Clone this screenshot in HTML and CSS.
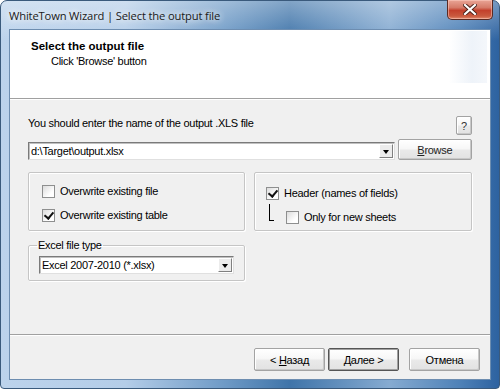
FILE: index.html
```html
<!DOCTYPE html>
<html>
<head>
    <meta charset="UTF-8">
    <title>WhiteTown Wizard</title>
    <link rel="stylesheet" href="styles.css">
</head>
<body>
    <div class="window">
        <div class="titlebar">
            <span class="title">WhiteTown Wizard | Select the output file</span>
            <div class="close-btn">
                <svg width="14" height="11" viewBox="0 0 14 11">
                    <path d="M2 1 L12 10 M12 1 L2 10" stroke="#4a2018" stroke-width="4" stroke-linecap="square"/>
                    <path d="M2 1 L12 10 M12 1 L2 10" stroke="#ffffff" stroke-width="2.2" stroke-linecap="square"/>
                </svg>
            </div>
        </div>

        <div class="client">
            <div class="header">
                <div class="header-text">
                    <div class="header-title">Select the output file</div>
                    <div class="header-sub">Click 'Browse' button</div>
                </div>
                <div class="header-pic"></div>
            </div>
            <div class="sep"></div>

            <div class="content">
                <div class="label-row">
                    <span class="label">You should enter the name of the output .XLS file</span>
                    <button class="btn btn-help">?</button>
                </div>

                <div class="file-row">
                    <div class="combo combo-file">
                        <span class="combo-text">d:\Target\output.xlsx</span>
                        <span class="combo-arrow"></span>
                    </div>
                    <button class="btn btn-browse"><u>B</u>rowse</button>
                </div>

                <div class="groups">
                    <div class="left-col">
                        <div class="group group-options">
                            <label class="check">
                                <span class="box"></span>
                                <span>Overwrite existing file</span>
                            </label>
                            <label class="check">
                                <span class="box checked"></span>
                                <span>Overwrite existing table</span>
                            </label>
                        </div>
                        <fieldset class="group group-type">
                            <legend>Excel file type</legend>
                            <div class="combo combo-type">
                                <span class="combo-text">Excel 2007-2010 (*.xlsx)</span>
                                <span class="combo-arrow"></span>
                            </div>
                        </fieldset>
                    </div>

                    <div class="group group-header">
                        <label class="check">
                            <span class="box checked"></span>
                            <span>Header (names of fields)</span>
                        </label>
                        <div class="sub-check">
                            <span class="tree"></span>
                            <label class="check">
                                <span class="box"></span>
                                <span>Only for new sheets</span>
                            </label>
                        </div>
                    </div>
                </div>
            </div>

            <div class="footer">
                <div class="sep"></div>
                <div class="buttons">
                    <button class="btn btn-nav">&lt; <u>Н</u>азад</button>
                    <button class="btn btn-nav btn-default"><u>Д</u>алее &gt;</button>
                    <button class="btn btn-nav btn-cancel">Отмена</button>
                </div>
            </div>
        </div>
    </div>
</body>
</html>
```

FILE: styles.css
```css
* {
    margin: 0;
    padding: 0;
    box-sizing: border-box;
}

body {
    width: 500px;
    height: 389px;
    overflow: hidden;
    background: #ffffff;
    font-family: 'Liberation Sans', Arial, sans-serif;
    font-size: 11px;
    letter-spacing: -0.28px;
    color: #000000;
}

/* Window frame */
.window {
    width: 500px;
    height: 389px;
    display: flex;
    flex-direction: column;
    padding: 0 8px 8px 8px;
    border: 1px solid #3a5a7c;
    border-radius: 7px 7px 4px 4px;
    background:
        linear-gradient(to bottom, rgba(255, 255, 255, 0.35), rgba(255, 255, 255, 0) 40px),
        linear-gradient(to right, #bcd3ec 0%, #b4cde8 25%, #6e9ac6 45%, #3f74a9 58%, #86abd1 78%, #4f82b8 92%, #2d62a0 100%);
}

.titlebar {
    height: 28px;
    display: flex;
    align-items: flex-start;
    position: relative;
}

.title {
    margin-top: 7px;
    font-family: 'Open Sans', 'Noto Sans', sans-serif;
    font-size: 11.2px;
    color: #1a1a1a;
    letter-spacing: -0.15px;
    text-shadow: 0 0 6px #ffffff, 0 0 10px rgba(255, 255, 255, 0.8);
}

.close-btn {
    position: absolute;
    right: -2px;
    top: -1px;
    width: 46px;
    height: 20px;
    border: 1px solid #5b2a22;
    border-top: none;
    border-radius: 0 0 5px 5px;
    background: linear-gradient(to bottom, #e9a596 0%, #d57a68 40%, #c3402c 55%, #c95a3f 85%, #e28b6e 100%);
    box-shadow: inset 0 0 0 1px rgba(255, 210, 200, 0.5);
    display: flex;
    align-items: center;
    justify-content: center;
}

/* Client area */
.client {
    flex: 1;
    display: flex;
    flex-direction: column;
    background: #f0f0f0;
    border: 1px solid #6d8db0;
}

.header {
    height: 68px;
    background: #ffffff;
    display: flex;
    justify-content: space-between;
    padding: 0 3px 0 21px;
}

.header-title {
    margin-top: 9px;
    font-weight: bold;
    font-size: 11.5px;
    letter-spacing: 0;
    line-height: 14px;
}

.header-sub {
    margin-top: 1px;
    padding-left: 20px;
    line-height: 14px;
}

.header-pic {
    width: 38px;
    height: 52px;
    margin-top: 1px;
    background: linear-gradient(to right, #ffffff, #eef3f9 60%, #f4f7fb);
}

.sep {
    height: 2px;
    border-top: 1px solid #a0a0a0;
    border-bottom: 1px solid #ffffff;
}

.content {
    padding: 0 18px;
    flex: 1;
}

.label-row {
    display: flex;
    justify-content: space-between;
    align-items: flex-start;
    margin-top: 16px;
    height: 18px;
}

.label {
    line-height: 14px;
}

.btn {
    font-family: 'Liberation Sans', Arial, sans-serif;
    font-size: 11px;
    letter-spacing: -0.28px;
    color: #000000;
    border: 1px solid #a3a3a3;
    border-radius: 2px;
    background: linear-gradient(to bottom, #ffffff 0%, #f7f7f7 45%, #e9e9e9 55%, #e2e2e2 100%);
    box-shadow: inset -1px -1px 0 #c8c8c8, inset 1px 1px 0 #ffffff;
}

.btn u {
    text-decoration: underline;
}

.btn-help {
    width: 16px;
    height: 19px;
    color: #333333;
}

.file-row {
    display: flex;
    align-items: center;
    margin-top: 5px;
    height: 21px;
}

.combo {
    display: flex;
    align-items: center;
    justify-content: space-between;
    height: 18px;
    background: #ffffff;
    border: 1px solid;
    border-color: #7a7a7a #e0e0e0 #e0e0e0 #7a7a7a;
    box-shadow: inset 1px 1px 0 #c0c0c0;
    padding: 0 1px 0 2px;
}

.combo-file {
    width: 370px;
    margin-top: 2px;
}

.combo-text {
    line-height: 14px;
}

.combo-arrow {
    width: 14px;
    height: 14px;
    border: 1px solid;
    border-color: #ffffff #808080 #808080 #ffffff;
    background: #ececec;
    position: relative;
}

.combo-arrow::after {
    content: "";
    position: absolute;
    left: 3px;
    top: 5px;
    border-left: 3.5px solid transparent;
    border-right: 3.5px solid transparent;
    border-top: 4px solid #000000;
}

.btn-browse {
    width: 75px;
    height: 21px;
    margin-left: 3px;
    color: #222222;
}

/* Group boxes */
.groups {
    display: flex;
    gap: 9px;
    margin-top: 12px;
}

.left-col {
    display: flex;
    flex-direction: column;
}

.group {
    border: 1px solid #c5c5c5;
    border-radius: 2px;
    box-shadow: inset 1px 1px 0 #ffffff, 1px 1px 0 #ffffff;
}

.group-options {
    width: 217px;
    height: 59px;
    padding: 11px 0 0 13px;
    display: flex;
    flex-direction: column;
    gap: 10px;
}

.group-header {
    width: 218px;
    height: 59px;
    padding: 13px 0 0 11px;
}

.group-type {
    width: 217px;
    height: 42px;
    margin-top: 8px;
    padding: 5px 0 0 10px;
}

.group-type legend {
    margin-left: -2px;
    padding: 0 1px;
    line-height: 12px;
}

.combo-type {
    width: 195px;
    height: 18px;
}

.check {
    display: flex;
    align-items: center;
    height: 14px;
    line-height: 14px;
}

.box {
    width: 13px;
    height: 13px;
    margin-right: 5px;
    border: 1px solid #8e8f8f;
    background: linear-gradient(135deg, #dcdcdc, #ffffff 70%);
    position: relative;
}

.box.checked::after {
    content: "";
    position: absolute;
    left: 3px;
    top: 0px;
    width: 4px;
    height: 7px;
    border-right: 2px solid #111111;
    border-bottom: 2px solid #111111;
    transform: rotate(40deg);
}

.sub-check {
    display: flex;
    align-items: flex-end;
    margin-top: 4px;
}

.tree {
    width: 5px;
    height: 17px;
    margin: 0 12px 4px 3px;
    border-left: 1px solid #000000;
    border-bottom: 1px solid #000000;
}

.sub-check .check {
    margin-bottom: 1px;
}

/* Footer */
.footer {
    height: 45px;
    display: flex;
    flex-direction: column;
}

.buttons {
    display: flex;
    justify-content: flex-end;
    padding: 12px 10px 0 0;
}

.btn-nav {
    width: 71px;
    height: 23px;
}

.btn-default {
    margin-left: 3px;
    border: 1px solid #555555;
    box-shadow: inset 0 0 0 1px #a0a0a0;
}

.btn-cancel {
    margin-left: 10px;
}
```
